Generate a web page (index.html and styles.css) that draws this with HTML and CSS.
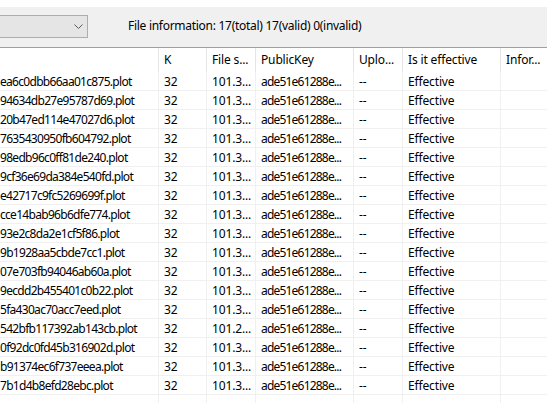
FILE: index.html
```html
<!DOCTYPE html>
<html>
<head>
<meta charset="utf-8">
<link rel="stylesheet" href="styles.css">
</head>
<body>
<div class="top-gap"></div>
<div class="toolbar">
  <div class="combo">
    <svg class="chev" width="9" height="6" viewBox="0 0 9 6"><path d="M0.5 0.5 L4.5 4.5 L8.5 0.5" fill="none" stroke="#5a5a5a" stroke-width="1"/></svg>
  </div>
  <div class="info">File information: 17(total) 17(valid) 0(invalid)</div>
</div>
<div class="list">
  <div class="row head">
    <div class="cell name"></div>
    <div class="cell">K</div>
    <div class="cell">File s...</div>
    <div class="cell">PublicKey</div>
    <div class="cell">Uplo...</div>
    <div class="cell">Is it effective</div>
    <div class="cell">Infor...</div>
  </div>
  <div class="row"><div class="cell name">ea6c0dbb66aa01c875.plot</div><div class="cell">32</div><div class="cell">101.3...</div><div class="cell key">ade51e61288e...</div><div class="cell">--</div><div class="cell">Effective</div><div class="cell"></div></div>
  <div class="row"><div class="cell name">94634db27e95787d69.plot</div><div class="cell">32</div><div class="cell">101.3...</div><div class="cell key">ade51e61288e...</div><div class="cell">--</div><div class="cell">Effective</div><div class="cell"></div></div>
  <div class="row"><div class="cell name">20b47ed114e47027d6.plot</div><div class="cell">32</div><div class="cell">101.3...</div><div class="cell key">ade51e61288e...</div><div class="cell">--</div><div class="cell">Effective</div><div class="cell"></div></div>
  <div class="row"><div class="cell name">7635430950fb604792.plot</div><div class="cell">32</div><div class="cell">101.3...</div><div class="cell key">ade51e61288e...</div><div class="cell">--</div><div class="cell">Effective</div><div class="cell"></div></div>
  <div class="row"><div class="cell name">98edb96c0ff81de240.plot</div><div class="cell">32</div><div class="cell">101.3...</div><div class="cell key">ade51e61288e...</div><div class="cell">--</div><div class="cell">Effective</div><div class="cell"></div></div>
  <div class="row"><div class="cell name">9cf36e69da384e540fd.plot</div><div class="cell">32</div><div class="cell">101.3...</div><div class="cell key">ade51e61288e...</div><div class="cell">--</div><div class="cell">Effective</div><div class="cell"></div></div>
  <div class="row"><div class="cell name">e42717c9fc5269699f.plot</div><div class="cell">32</div><div class="cell">101.3...</div><div class="cell key">ade51e61288e...</div><div class="cell">--</div><div class="cell">Effective</div><div class="cell"></div></div>
  <div class="row"><div class="cell name">cce14bab96b6dfe774.plot</div><div class="cell">32</div><div class="cell">101.3...</div><div class="cell key">ade51e61288e...</div><div class="cell">--</div><div class="cell">Effective</div><div class="cell"></div></div>
  <div class="row"><div class="cell name">93e2c8da2e1cf5f86.plot</div><div class="cell">32</div><div class="cell">101.3...</div><div class="cell key">ade51e61288e...</div><div class="cell">--</div><div class="cell">Effective</div><div class="cell"></div></div>
  <div class="row"><div class="cell name">9b1928aa5cbde7cc1.plot</div><div class="cell">32</div><div class="cell">101.3...</div><div class="cell key">ade51e61288e...</div><div class="cell">--</div><div class="cell">Effective</div><div class="cell"></div></div>
  <div class="row"><div class="cell name">07e703fb94046ab60a.plot</div><div class="cell">32</div><div class="cell">101.3...</div><div class="cell key">ade51e61288e...</div><div class="cell">--</div><div class="cell">Effective</div><div class="cell"></div></div>
  <div class="row"><div class="cell name">9ecdd2b455401c0b22.plot</div><div class="cell">32</div><div class="cell">101.3...</div><div class="cell key">ade51e61288e...</div><div class="cell">--</div><div class="cell">Effective</div><div class="cell"></div></div>
  <div class="row"><div class="cell name">5fa430ac70acc7eed.plot</div><div class="cell">32</div><div class="cell">101.3...</div><div class="cell key">ade51e61288e...</div><div class="cell">--</div><div class="cell">Effective</div><div class="cell"></div></div>
  <div class="row"><div class="cell name">542bfb117392ab143cb.plot</div><div class="cell">32</div><div class="cell">101.2...</div><div class="cell key">ade51e61288e...</div><div class="cell">--</div><div class="cell">Effective</div><div class="cell"></div></div>
  <div class="row"><div class="cell name">0f92dc0fd45b316902d.plot</div><div class="cell">32</div><div class="cell">101.3...</div><div class="cell key">ade51e61288e...</div><div class="cell">--</div><div class="cell">Effective</div><div class="cell"></div></div>
  <div class="row"><div class="cell name">b91374ec6f737eeea.plot</div><div class="cell">32</div><div class="cell">101.3...</div><div class="cell key">ade51e61288e...</div><div class="cell">--</div><div class="cell">Effective</div><div class="cell"></div></div>
  <div class="row"><div class="cell name">7b1d4b8efd28ebc.plot</div><div class="cell">32</div><div class="cell">101.3...</div><div class="cell key">ade51e61288e...</div><div class="cell">--</div><div class="cell">Effective</div><div class="cell"></div></div>
  <div class="row tail"><div class="cell name"></div><div class="cell"></div><div class="cell"></div><div class="cell"></div><div class="cell"></div><div class="cell"></div><div class="cell"></div></div>
</div>
</body>
</html>
```
FILE: styles.css
```css
html, body {
  margin: 0;
  padding: 0;
  background: #ffffff;
  overflow: hidden;
  width: 547px;
  height: 411px;
}
body {
  font-family: "Noto Sans", "Open Sans", sans-serif;
  font-size: 12px;
  color: #000000;
  letter-spacing: -0.15px;
}
.top-gap {
  height: 7px;
  background: #ffffff;
}
.toolbar {
  height: 40px;
  background: #f0f0f0;
  border-bottom: 1px solid #a0a0a0;
  display: flex;
  align-items: flex-start;
  overflow: hidden;
}
.combo {
  margin-top: 8px;
  width: 88px;
  flex: 0 0 88px;
  height: 23px;
  box-sizing: border-box;
  border: 1px solid #adadad;
  border-left: none;
  background: #e5e5e5;
  display: flex;
  align-items: center;
  justify-content: flex-end;
  padding-right: 4px;
}
.chev {
  display: block;
}
.info {
  margin-left: 40px;
  line-height: 38px;
  white-space: nowrap;
  letter-spacing: -0.28px;
}
.list {
  display: flex;
  flex-direction: column;
  width: 547px;
  overflow: hidden;
}
.row {
  display: grid;
  grid-template-columns: 159px 48px 49px 98px 49px 98px 98px;
  height: 19px;
  box-sizing: border-box;
  border-bottom: 1px solid #f0f0f0;
}
.row.head {
  height: 24px;
  border-bottom: none;
}
.row.tail {
  height: 8px;
  border-bottom: none;
}
.cell {
  box-sizing: border-box;
  border-right: 1px solid #f0f0f0;
  padding-left: 5px;
  padding-top: 1px;
  white-space: nowrap;
  overflow: hidden;
  line-height: 18px;
}
.head .cell {
  border-right-color: #e5e5e5;
  line-height: 24px;
  padding-top: 0;
}
.cell.name {
  padding-left: 0;
  letter-spacing: -0.7px;
}
.cell.key {
  letter-spacing: -0.8px;
}
```
